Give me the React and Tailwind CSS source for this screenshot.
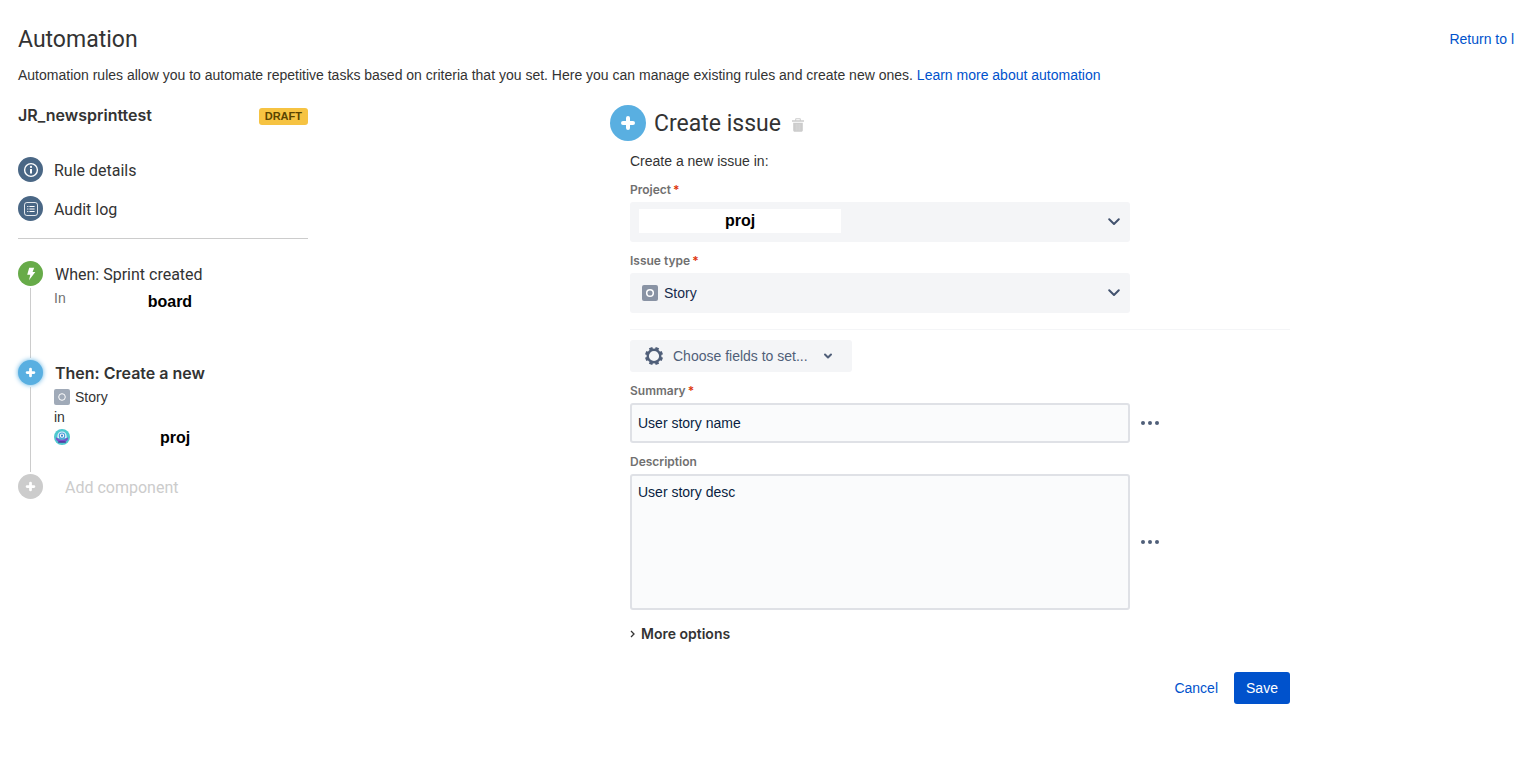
import { useState } from "react";

const Plus = ({ className }) => (
  <svg viewBox="0 0 16 16" className={className} fill="none" stroke="currentColor" strokeWidth="4" strokeLinecap="round" aria-hidden="true">
    <path d="M8 3v10M3 8h10" />
  </svg>
);

const Chevron = () => (
  <svg viewBox="0 0 14 10" className="h-[10px] w-[14px] shrink-0 text-[#42526e]" fill="none" stroke="currentColor" strokeWidth="2" strokeLinecap="round" strokeLinejoin="round" aria-hidden="true">
    <path d="M2.2 2.300 7 7l4.800-4.700" />
  </svg>
);

const InfoIcon = () => (
  <svg viewBox="0 0 16 16" className="size-4" fill="none" stroke="currentColor" aria-hidden="true">
    <circle cx="8" cy="8" r="6.4" strokeWidth="1.4" />
    <path d="M8 6.900v4.600" strokeWidth="2" />
    <circle cx="8" cy="4.900" r="1.100" fill="currentColor" stroke="none" />
  </svg>
);

const LogIcon = () => (
  <svg viewBox="0 0 16 16" className="size-4" fill="none" stroke="currentColor" strokeWidth="1" aria-hidden="true">
    <rect x="1.500" y="1.500" width="13" height="13" rx="2.400" strokeOpacity=".85" />
    <path d="M4.200 5.500h1.200M6.400 5.500h5.200M4.200 8h1.200M6.400 8h5.200M4.200 10.500h1.200M6.400 10.500h5.200" />
  </svg>
);

const BoltIcon = () => (
  <svg viewBox="0 0 12 14" className="h-[14px] w-3" fill="currentColor" aria-hidden="true">
    <path d="M4.200.8h5L7.600 4.900h2.700L4 13.200l1.300-5.400H2.200z" />
  </svg>
);

const TrashIcon = () => (
  <svg viewBox="0 0 12 14" className="h-[14px] w-3" fill="#ccc" aria-hidden="true">
    <path d="M0 2.300h3.200V1.200c0-.6.4-1 1-1h3.600c.6 0 1 .4 1 1v1.100H12v1.400H0zM4.200 1.300v1h3.600v-1z" />
    <path d="M1.200 4.700h9.600v7.600c0 .9-.6 1.500-1.500 1.500H2.700c-.9 0-1.500-.6-1.500-1.500z" />
    <path d="M4.200 6v6.400M6 6v6.400M7.800 6v6.400" stroke="#ddd" strokeWidth=".6" />
  </svg>
);

const GearIcon = () => (
  <svg viewBox="0 0 18 18" className="size-[18px]" fill="none" stroke="currentColor" aria-hidden="true">
    <circle cx="9" cy="9" r="6.300" strokeWidth="2.400" />
    <g strokeWidth="3.600">
      {[22.5, 67.5, 112.5, 157.5, 202.5, 247.5, 292.5, 337.5].map((angle) => (
        <path key={angle} d="M9 0v2.600" transform={`rotate(${angle} 9 9)`} />
      ))}
    </g>
  </svg>
);

const StoryIcon = ({ className }) => (
  <svg viewBox="0 0 16 16" className={className} strokeWidth="1.500" aria-hidden="true">
    <rect width="16" height="16" rx="2" fill="currentColor" />
    <circle cx="8" cy="8" r="3.300" fill="none" stroke="#fff" />
  </svg>
);

const ProjectAvatar = () => (
  <svg viewBox="0 0 16 16" className="size-4" aria-hidden="true">
    <circle cx="8" cy="8" r="8" fill="#4fc8cf" />
    <path d="M3.400 9V7a4.600 4.600 0 0 1 9.200 0v2z" fill="#e3effb" />
    <circle cx="8" cy="6.700" r="2.700" fill="#fff" stroke="#4a9fdc" strokeWidth="1.100" />
    <circle cx="8" cy="6.700" r="1.100" fill="#3c7fc0" />
    <path d="M1.800 8.500c1.200-.4 2 .9 3 1.600 1.700 1 4.700 1 6.400 0 1-.7 1.800-2 3-1.600-.1 2.700-1.600 4.700-6.200 4.700s-6.100-2-6.200-4.700z" fill="#7a52cc" />
    <path d="M4.500 12.300h7l.5 1.500H4z" fill="#50349b" />
  </svg>
);

const Label = ({ htmlFor, required, children }) => (
  <label htmlFor={htmlFor} className="mt-[11px] mb-1 flex gap-0.5 font-[Inter,sans-serif] text-xs leading-4 font-semibold text-[#707070]">
    {children}
    {required && <span className="text-[#de350b]">*</span>}
  </label>
);

const MoreButton = ({ label }) => (
  <button type="button" aria-label={label} className="flex gap-[3px] text-[#505f79]">
    <span className="size-1 rounded-full bg-current" />
    <span className="size-1 rounded-full bg-current" />
    <span className="size-1 rounded-full bg-current" />
  </button>
);

const Step = ({ icon, iconClass, last, children }) => (
  <li className="flex gap-[11px]">
    <div className="flex w-[25px] shrink-0 flex-col items-center">
      <span className={`flex size-[25px] shrink-0 items-center justify-center rounded-full text-white ${iconClass}`}>{icon}</span>
      {!last && <span className="mt-0.5 mb-0.5 w-px flex-1 bg-[#ccc]" />}
    </div>
    {children}
  </li>
);

const Sidebar = () => (
  <aside className="w-[290px] shrink-0 text-[#333]">
    <div className="flex h-[22px] items-center justify-between">
      <h2 className="pb-0.5 font-[Inter,sans-serif] text-base leading-5 font-semibold">JR_newsprinttest</h2>
      <span className="rounded-[3px] bg-[#f6c342] px-[6px] text-[11px] leading-[17px] font-bold text-[#594300]">DRAFT</span>
    </div>
    <nav className="mt-[30px] flex flex-col gap-[14px] border-b border-[#ccc] pb-[17px] font-[Roboto,sans-serif] text-base">
      <a href="#details" className="flex h-[25px] items-center gap-[11px] leading-[25px]">
        <span className="flex size-[25px] items-center justify-center rounded-full bg-[#4a6785] text-white"><InfoIcon /></span>
        <span className="pt-0.5">Rule details</span>
      </a>
      <a href="#log" className="flex h-[25px] items-center gap-[11px] leading-[25px]">
        <span className="flex size-[25px] items-center justify-center rounded-full bg-[#4a6785] text-white"><LogIcon /></span>
        <span className="pt-0.5">Audit log</span>
      </a>
    </nav>
    <ol className="mt-[22px]">
      <Step icon={<BoltIcon />} iconClass="bg-[#67ab49]">
        <div className="h-[99px]">
          <h3 className="pl-px font-[Roboto,sans-serif] text-base leading-[27px]">When: Sprint created</h3>
          <p className="flex gap-[82px] text-sm leading-5 text-[#707070]">
            In <strong className="pt-1 text-base leading-5 text-black">board</strong>
          </p>
        </div>
      </Step>
      <Step icon={<Plus className="size-[11px]" />} iconClass="bg-[#59afe1] shadow-[0_0_5px_#59afe1]">
        <div className="h-[114px] text-sm leading-5">
          <h3 className="pl-px font-[Inter,sans-serif] text-base leading-[27px] font-semibold">Then: Create a new</h3>
          <p className="flex items-center gap-[5px]">
            <StoryIcon className="size-4 text-[#a0aab8] [stroke-width:1]" /> Story
          </p>
          <p>in</p>
          <p className="flex h-5 items-center gap-[90px]">
            <ProjectAvatar /> <strong className="pt-0.5 text-base leading-5 text-black">proj</strong>
          </p>
        </div>
      </Step>
      <Step icon={<Plus className="size-[11px]" />} iconClass="bg-[#ccc]" last>
        <button type="button" className="h-[25px] pl-[11px] font-[Roboto,sans-serif] text-base leading-[27px] text-[#ccc]">Add component</button>
      </Step>
    </ol>
  </aside>
);

const IssueForm = () => {
  const [summary, setSummary] = useState("User story name");
  const [description, setDescription] = useState("User story desc");

  return (
    <form className="mx-auto w-full max-w-[680px]" onSubmit={(e) => e.preventDefault()}>
      <div className="flex h-9 items-center">
        <span className="flex size-9 items-center justify-center rounded-full bg-[#59afe1] text-white">
          <Plus className="size-4" />
        </span>
        <h2 className="ml-2 pt-0.5 font-[Roboto,sans-serif] text-[23px] leading-7 text-[#333]">Create issue</h2>
        <button type="button" aria-label="Delete component" className="ml-[11px] pt-1"><TrashIcon /></button>
      </div>
      <div className="pl-5">
        <p className="mt-[10px]">Create a new issue in:</p>

        <Label htmlFor="project" required>Project</Label>
        <div className="flex h-10 w-[500px] items-center justify-between rounded-[3px] bg-[#f4f5f7] px-[9px]">
          <select id="project" className="mb-0.5 h-6 w-[202px] appearance-none bg-white text-center text-base leading-5 font-bold text-black">
            <option>proj</option>
          </select>
          <Chevron />
        </div>

        <Label htmlFor="issue-type" required>Issue type</Label>
        <div className="flex h-10 w-[500px] items-center rounded-[3px] bg-[#f4f5f7] pr-[9px] pl-3">
          <StoryIcon className="size-4 text-[#8993a4]" />
          <select id="issue-type" className="h-10 flex-1 appearance-none pl-[6px] text-[#172b4d]">
            <option>Story</option>
          </select>
          <Chevron />
        </div>

        <hr className="mt-4 mb-[10px] border-[#f4f5f7]" />

        <button type="button" className="flex h-8 w-[222px] items-center rounded-[3px] bg-[#f4f5f7] pl-[15px] text-[#505f79]">
          <GearIcon />
          <span className="ml-[10px]">Choose fields to set...</span>
          <svg viewBox="0 0 10 8" className="ml-[15px] h-2 w-[10px]" fill="none" stroke="currentColor" strokeWidth="2" strokeLinecap="round" strokeLinejoin="round" aria-hidden="true">
            <path d="M2 2.500l3 3 3-3" />
          </svg>
        </button>

        <Label htmlFor="summary" required>Summary</Label>
        <div className="flex items-center gap-[11px]">
          <input
            id="summary"
            value={summary}
            onChange={(e) => setSummary(e.target.value)}
            className="h-10 w-[500px] rounded-[3px] border-2 border-[#dfe1e6] bg-[#fafbfc] px-[6px] text-[#091e42]"
          />
          <MoreButton label="Summary options" />
        </div>

        <Label htmlFor="description">Description</Label>
        <div className="flex items-center gap-[11px]">
          <textarea
            id="description"
            value={description}
            onChange={(e) => setDescription(e.target.value)}
            className="h-[136px] w-[500px] resize-none rounded-[3px] border-2 border-[#dfe1e6] bg-[#fafbfc] px-[6px] py-[6px] text-[#091e42]"
          />
          <MoreButton label="Description options" />
        </div>

        <button type="button" className="mt-[14px] flex items-center gap-[5px] font-[Inter,sans-serif] font-semibold text-[#333]">
          <svg viewBox="0 0 6 8" className="h-2 w-[6px]" fill="none" stroke="currentColor" strokeWidth="1.300" aria-hidden="true">
            <path d="M1 1l3 3-3 3" />
          </svg>
          More options
        </button>

        <div className="mt-7 flex justify-end gap-1">
          <button type="button" className="h-8 px-3 text-[#0052cc]">Cancel</button>
          <button type="submit" className="h-8 w-14 rounded-[3px] bg-[#0052cc] text-white">Save</button>
        </div>
      </div>
    </form>
  );
};

const App = () => (
  <div className="min-h-screen bg-white pt-[26px] pb-16 pl-[18px] font-['Liberation_Sans',Arial,sans-serif] text-sm leading-5 text-[#333]">
    <header>
      <div className="flex items-start justify-between">
        <h1 className="font-[Roboto,sans-serif] text-[23px] leading-7">Automation</h1>
        <a href="#list" className="leading-[26px] text-[#0052cc]">Return to l</a>
      </div>
      <p className="mt-[11px]">
        Automation rules allow you to automate repetitive tasks based on criteria that you set. Here you can manage existing rules and create new ones.{" "}
        <a href="#learn" className="text-[#0052cc]">Learn more about automation</a>
      </p>
    </header>
    <div className="mt-5 flex">
      <Sidebar />
      <main className="ml-[78px] flex-1">
        <IssueForm />
      </main>
    </div>
  </div>
);

export default App;
